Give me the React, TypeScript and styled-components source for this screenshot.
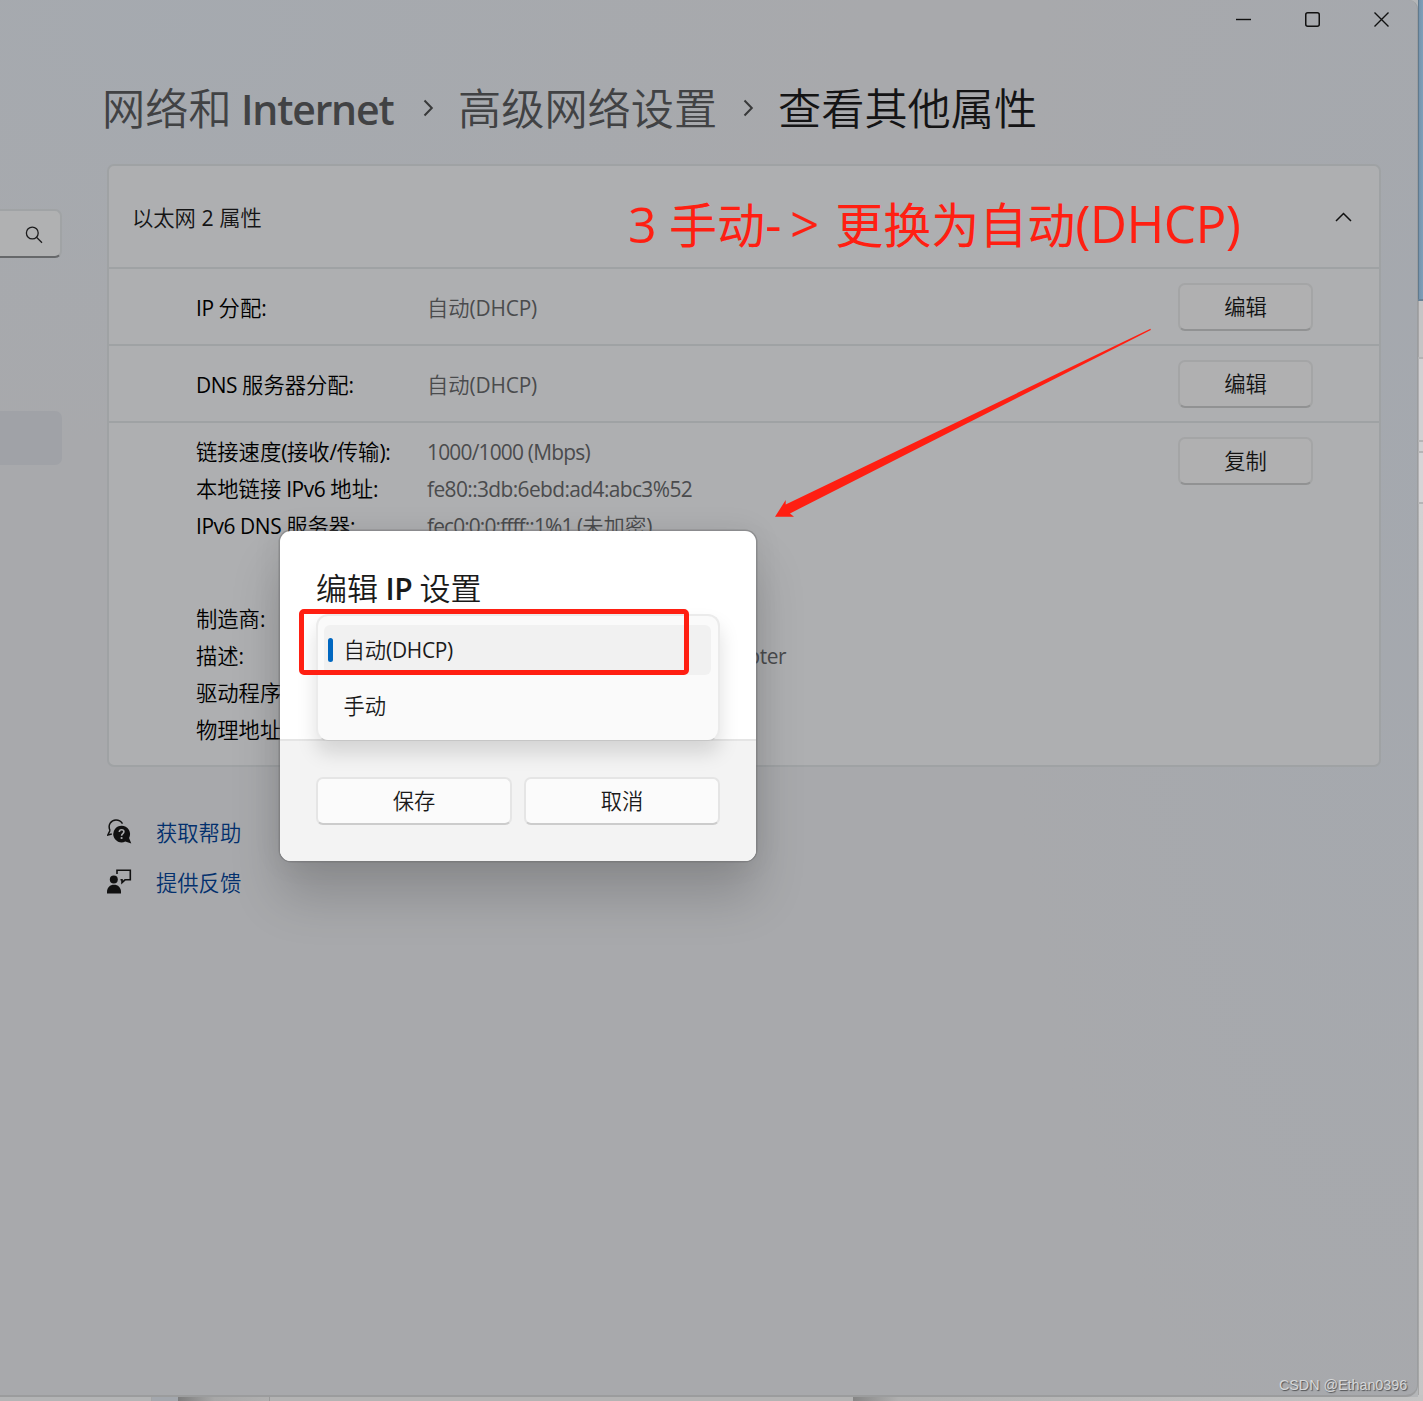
import React from "react";
import styled, { createGlobalStyle } from "styled-components";

const GlobalStyle = createGlobalStyle`
  *, *::before, *::after { box-sizing: border-box; }
  body { margin: 0; overflow: hidden; }
`;

const latin = `"Open Sans", "Noto Sans CJK SC", sans-serif`;
const cjk = `"Noto Sans CJK SC", "Open Sans", sans-serif`;

const Desktop = styled.div`
  position: relative;
  width: 1423px;
  height: 1401px;
  overflow: hidden;
  display: grid;
  grid-template-columns: 1418px 5px;
  grid-template-rows: 1397px 4px;
  background: #b4b6b8;
  font-family: ${cjk};
  font-weight: 350;
  color: #000;
`;

const RightStrip = styled.div`
  display: flex;
  flex-direction: column;
`;

const Strip = styled.div<{ $h: number; $bg: string; $line: string }>`
  height: ${(p) => p.$h}px;
  background: ${(p) => p.$bg};
  border-bottom: 2px solid ${(p) => p.$line};
  box-shadow: inset 1px 0 0 rgba(0, 0, 0, 0.16);
`;

const BottomStrip = styled.div`
  grid-column: 1 / 3;
  display: flex;
`;

const BottomPart = styled.div<{ $w: number; $bg: string; $edge?: string }>`
  width: ${(p) => p.$w}px;
  background: ${(p) => p.$bg};
  border-right: ${(p) => (p.$edge ? `1px solid ${p.$edge}` : "0")};
`;

const Window = styled.main`
  display: flex;
  background:
    radial-gradient(ellipse 700px 420px at 12% 2%, rgba(163, 170, 178, 0.55), transparent),
    radial-gradient(ellipse 420px 1100px at 100% 35%, rgba(162, 168, 176, 0.6), transparent),
    #a8a9ac;
  border-bottom: 2px solid #9b9c9d;
  border-right: 1px solid #9b9d9f;
  border-radius: 0 9px 12px 0;
`;

const Sidebar = styled.aside`
  width: 107px;
  padding-top: 209px;
  flex: none;
`;

const SearchBox = styled.div`
  width: 62px;
  height: 49px;
  display: flex;
  align-items: center;
  justify-content: flex-end;
  padding: 2px 17px 0 0;
  background: #b0b1b2;
  border: 2px solid #a0a3a5;
  border-left: 0;
  border-bottom-color: #66686a;
  border-radius: 0 7px 7px 0;
`;

const NavItem = styled.div`
  width: 62px;
  height: 54px;
  margin-top: 153px;
  background: #a0a2a7;
  border-radius: 0 7px 7px 0;
`;

const Content = styled.section`
  flex: 1;
  display: flex;
  flex-direction: column;
`;

const TitleBar = styled.header`
  height: 38px;
  display: flex;
  justify-content: flex-end;
  align-items: center;
  gap: 53px;
  padding-right: 27px;
`;

const Breadcrumb = styled.nav`
  height: 126px;
  display: flex;
  align-items: flex-start;
  padding-top: 36px;
  margin-left: -5px;
  line-height: 64px;
  font-size: 43.2px;
`;

const Crumb = styled.span<{ $current?: boolean; $w: number }>`
  color: ${(p) => (p.$current ? "#141415" : "#414244")};
  width: ${(p) => p.$w}px;
  white-space: nowrap;
`;

const CrumbSep = styled.svg<{ $w: number }>`
  width: ${(p) => p.$w}px;
  height: 64px;
  flex: none;
  margin-top: 2px;
`;

const Card = styled.section`
  width: 1274px;
  height: 603px;
  border: 2px solid #9fa2a4;
  border-radius: 7px;
  background: #aeafb1;
  font-size: 21.3px;
  line-height: 37px;
`;

const CardHeader = styled.div`
  height: 101px;
  display: flex;
  align-items: center;
  justify-content: space-between;
  padding: 0 27px 0 23px;
  color: #141415;
`;

const Row = styled.div`
  height: 77px;
  border-top: 2px solid #9fa2a4;
  padding: 14px 66px 0 87px;
  display: flex;
  align-items: flex-start;
`;

const Details = styled(Row)`
  height: auto;
`;

const RowText = styled.div`
  flex: 1;
  display: flex;
  padding-top: 5px;
`;

const DetailList = styled.dl`
  flex: 1;
  margin: -5px 0 0;
  display: grid;
  grid-template-columns: 231px 1fr;
  grid-template-rows: 37px 37px 93px 37px 37px 37px 37px;
`;

const Label = styled.dt`
  width: 231px;
  white-space: nowrap;
`;

const Value = styled.dd<{ $indent?: number }>`
  margin: 0;
  padding-left: ${(p) => p.$indent || 0}px;
  color: #4a4b4d;
  white-space: nowrap;
`;

const Button = styled.button<{ $dim?: boolean }>`
  flex: ${(p) => (p.$dim ? "none" : "1")};
  width: 135px;
  height: 48px;
  padding: 0 0 2px;
  border: 2px solid ${(p) => (p.$dim ? "#a4a5a6" : "#e5e5e5")};
  border-bottom-color: ${(p) => (p.$dim ? "#919293" : "#cccccc")};
  border-radius: 7px;
  background: ${(p) => (p.$dim ? "#b0b0b1" : "#fbfbfb")};
  color: ${(p) => (p.$dim ? "#121212" : "#1a1a1a")};
  font: 350 21.3px/32px ${cjk};
`;

const Links = styled.div`
  margin-top: 40px;
  display: flex;
  flex-direction: column;
`;

const LinkRow = styled.a`
  height: 50px;
  display: flex;
  align-items: center;
  gap: 24px;
  color: #03306d;
  font-size: 21.3px;
`;

const LinkText = styled.span`
  padding-bottom: 2px;
`;

const Latin = styled.span<{ $track: number; $size?: number; $weight?: number }>`
  font-family: ${latin};
  letter-spacing: ${(p) => p.$track}px;
  font-weight: ${(p) => p.$weight || 400};
  ${(p) => (p.$size ? `font-size: ${p.$size}px;` : "")}
`;

const Dialog = styled.section`
  position: absolute;
  left: 280px;
  top: 531px;
  width: 476px;
  height: 330px;
  border-radius: 11px;
  background: #fff;
  overflow: hidden;
  display: flex;
  flex-direction: column;
`;

const DialogShadow = styled.div`
  position: absolute;
  left: 280px;
  top: 531px;
  width: 476px;
  height: 330px;
  border-radius: 11px;
  box-shadow: 0 0 0 1.5px rgba(100, 100, 102, 0.4), 0 36px 50px rgba(0, 0, 0, 0.17), 0 0 30px rgba(0, 0, 0, 0.08);
`;

const DialogBody = styled.div`
  height: 208px;
  padding: 35px 36px 0;
`;

const DialogTitle = styled.h2`
  margin: 0;
  font-size: 31px;
  font-weight: 350;
  line-height: 42px;
  color: #1a1a1a;
  white-space: nowrap;
`;

const DialogFooter = styled.footer`
  flex: 1;
  display: flex;
  gap: 12px;
  align-items: flex-start;
  padding: 36px 36px 0;
  border-top: 2px solid #e5e5e5;
  background: #f3f3f3;
`;

const Dropdown = styled.ul`
  position: absolute;
  left: 316px;
  top: 614px;
  width: 404px;
  height: 127px;
  margin: 0;
  padding: 9px 7px 0 6px;
  list-style: none;
  border: 2px solid #ebebeb;
  border-bottom: 1px solid #c6c6c6;
  border-radius: 12px;
  background: #fafafa;
  box-shadow: 0 12px 20px rgba(0, 0, 0, 0.13);
`;

const Option = styled.li<{ $selected?: boolean }>`
  height: 50px;
  margin-bottom: 6px;
  display: flex;
  align-items: center;
  gap: ${(p) => (p.$selected ? 10.5 : 0)}px;
  padding: 0 0 ${(p) => (p.$selected ? "1px 4px" : "2px 19.5px")};
  border-radius: 6px;
  background: ${(p) => (p.$selected ? "#f1f1f1" : "transparent")};
  color: #1a1a1a;
  font-size: 21.3px;
  line-height: 32px;
`;

const Marker = styled.i`
  width: 5px;
  height: 24px;
  margin-top: 1px;
  border-radius: 3px;
  background: #0067c0;
`;

const RedBox = styled.div`
  position: absolute;
  left: 299px;
  top: 609px;
  width: 390px;
  height: 66px;
  border: 5px solid #ff1f12;
  border-radius: 5px;
`;

const RedNote = styled.div`
  position: absolute;
  left: 628px;
  top: 186px;
  display: flex;
  align-items: baseline;
  font-size: 48px;
  font-weight: 400;
  line-height: 72px;
  color: #ff1f12;
  white-space: pre;
`;

const Arrow = styled.svg`
  position: absolute;
  left: 770px;
  top: 325px;
`;

const Watermark = styled.div`
  position: absolute;
  left: 1279px;
  top: 1376px;
  font: 14.3px/18px "Liberation Sans", sans-serif;
  color: #d6d7d8;
  text-shadow: 1px 1px 1px #505153;
  white-space: nowrap;
`;

type MixedProps = { text: string; track?: number; size?: number; weight?: number };

function Mixed({ text, track = -0.42, size = 20.9, weight }: MixedProps) {
  const runs = text.match(/[\u4e00-\u9fff]+|[^\u4e00-\u9fff]+/g) || [];
  return (
    <>
      {runs.map((run, i) =>
        /[\u4e00-\u9fff]/.test(run) ? (
          <span key={i}>{run}</span>
        ) : (
          <Latin key={i} $track={track} $size={size} $weight={weight}>{run}</Latin>
        )
      )}
    </>
  );
}

const details: { label: string; value?: string; track?: number; indent?: number }[] = [
  { label: "链接速度(接收/传输):", value: "1000/1000 (Mbps)", track: -0.78 },
  { label: "本地链接 IPv6 地址:", value: "fe80::3db:6ebd:ad4:abc3%52", track: -0.6 },
  { label: "IPv6 DNS 服务器:", value: "fec0:0:0:ffff::1%1 (未加密)", track: -0.88 },
  { label: "制造商:" },
  { label: "描述:", value: "Adapter", indent: 284 },
  { label: "驱动程序版本:" },
  { label: "物理地址(MAC):" },
];

const SearchIcon = () => (
  <svg width="18" height="18" viewBox="0 0 18 18" fill="none" stroke="#1c1c1d" strokeWidth="1.3">
    <circle cx="7.300" cy="7" r="5.900" />
    <path d="M11.500 11.200 17 16.700" />
  </svg>
);

const HelpIcon = () => (
  <svg width="25" height="26" viewBox="0 0 25 26">
    <path d="M3 11.500C.5 6 4 1 9 1c2.800 0 5 1.300 6.500 3.600M3 11.500 .8 16l4-.9" fill="none" stroke="#111" strokeWidth="1.500" />
    <path d="M14.500 6.800a8.300 8.300 0 1 0 3.800 15.700l6 2.100-2.200-5.600A8.300 8.300 0 0 0 14.500 6.800Z" fill="#111" />
    <path d="M12.300 13c.1-1.500 1-2.200 2.300-2.200s2.300.8 2.300 2c0 1.900-2.300 1.800-2.300 3.900" fill="none" stroke="#aaabad" strokeWidth="1.600" />
    <circle cx="14.600" cy="19" r="1.100" fill="#aaabad" />
  </svg>
);

const FeedbackIcon = () => (
  <svg width="25" height="26" viewBox="0 0 25 26">
    <circle cx="6.800" cy="10.500" r="4" fill="#111" />
    <path d="M0 24.500v-1.500C0 18.500 3 15.800 7 15.800s7 2.700 7 7.200v1.500Z" fill="#111" />
    <path d="M10 5V1.300h13.300v9.500h-5.300l-3 2.800v-2.800H13.500" fill="none" stroke="#111" strokeWidth="1.600" />
  </svg>
);

export default function App() {
  return (
    <>
      <GlobalStyle />
      <Desktop>
        <Window>
          <Sidebar>
            <SearchBox><SearchIcon /></SearchBox>
            <NavItem />
          </Sidebar>
          <Content>
            <TitleBar>
              <svg width="16" height="16"><path d="M0 8.500h15" stroke="#111" strokeWidth="1.400" /></svg>
              <svg width="16" height="16"><rect x=".75" y="1.750" width="13.500" height="13.500" rx="2" fill="none" stroke="#111" strokeWidth="1.500" /></svg>
              <svg width="16" height="16"><path d="m.5 1.500 14 14M14.500 1.500 .5 15.500" stroke="#111" strokeWidth="1.400" /></svg>
            </TitleBar>
            <Breadcrumb>
              <Crumb $w={293}><Mixed text="网络和 Internet" size={41} weight={600} track={-1.2} /></Crumb>
              <CrumbSep $w={63} viewBox="0 0 63 64"><path d="m29.500 24.500 7.300 7.500-7.300 7.500" fill="none" stroke="#38393a" strokeWidth="2" /></CrumbSep>
              <Crumb $w={258}>高级网络设置</Crumb>
              <CrumbSep $w={62} viewBox="0 0 62 64"><path d="m28.500 24.500 7.300 7.500-7.300 7.500" fill="none" stroke="#38393a" strokeWidth="2" /></CrumbSep>
              <Crumb $w={260} $current>查看其他属性</Crumb>
            </Breadcrumb>
            <Card>
              <CardHeader>
                <span><Mixed text="以太网 2 属性" size={21.3} track={0} /></span>
                <svg width="17" height="12"><path d="m1 10 7.500-7.500L16 10" fill="none" stroke="#111" strokeWidth="1.500" /></svg>
              </CardHeader>
              <Row>
                <RowText>
                  <Label><Mixed text="IP 分配:" /></Label>
                  <Value><Mixed text="自动(DHCP)" track={-0.2} /></Value>
                </RowText>
                <Button $dim>编辑</Button>
              </Row>
              <Row>
                <RowText>
                  <Label><Mixed text="DNS 服务器分配:" /></Label>
                  <Value><Mixed text="自动(DHCP)" track={-0.2} /></Value>
                </RowText>
                <Button $dim>编辑</Button>
              </Row>
              <Details>
                <DetailList>
                  {details.map((d) => (
                    <React.Fragment key={d.label}>
                      <Label><Mixed text={d.label} /></Label>
                      <Value $indent={d.indent}>{d.value && <Mixed text={d.value} track={d.track} />}</Value>
                    </React.Fragment>
                  ))}
                </DetailList>
                <Button $dim>复制</Button>
              </Details>
            </Card>
            <Links>
              <LinkRow><HelpIcon /><LinkText>获取帮助</LinkText></LinkRow>
              <LinkRow><FeedbackIcon /><LinkText>提供反馈</LinkText></LinkRow>
            </Links>
          </Content>
        </Window>
        <RightStrip>
          <Strip $h={301} $bg="linear-gradient(90deg,#7290a8,#7f9fba)" $line="#6a8397" />
          <Strip $h={58} $bg="#c6c5c6" $line="#b4b4b5" />
          <Strip $h={83} $bg="#d2d1d3" $line="#b5b5b6" />
          <Strip $h={11} $bg="#d2d1d3" $line="#b5b5b6" />
          <Strip $h={51} $bg="#d6d5d7" $line="#b5b5b6" />
          <Strip $h={893} $bg="linear-gradient(#d2d2d3,#c6c6c6)" $line="#c4c4c4" />
        </RightStrip>
        <BottomStrip>
          <BottomPart $w={152} $bg="#b3b4b5" $edge="#a3a4a5" />
          <BottomPart $w={26} $bg="#a3a7ad" />
          <BottomPart $w={92} $bg="linear-gradient(90deg,#7c7c7c,#a8a8a8 40%,#b0b0b0)" $edge="#999999" />
          <BottomPart $w={583} $bg="#b3b3b3" />
          <BottomPart $w={570} $bg="linear-gradient(90deg,#858585,#b0b0b0 8%,#c4c4c4)" />
        </BottomStrip>
        <DialogShadow />
        <Dialog>
          <DialogBody>
            <DialogTitle><Mixed text="编辑 IP 设置" weight={600} size={30} track={-0.4} /></DialogTitle>
          </DialogBody>
          <DialogFooter>
            <Button>保存</Button>
            <Button>取消</Button>
          </DialogFooter>
        </Dialog>
        <Dropdown>
          <Option $selected><Marker /><span><Mixed text="自动(DHCP)" track={-0.3} /></span></Option>
          <Option><span>手动</span></Option>
        </Dropdown>
        <RedBox />
        <RedNote>
          <Mixed text="3 手动" size={50} track={-0.3} />
          <Mixed text="->" size={51} track={8.5} />
          <Mixed text=" " size={51} track={-5.5} />
          <Mixed text="更换为自动(DHCP)" size={51.3} track={-0.6} />
        </RedNote>
        <Arrow width="385" height="196">
          <path d="M380.500 3.800 15.700 179.600V175L5 191.800h19l-4-3.400L380.800 5Z" fill="#ff1f12" />
        </Arrow>
        <Watermark>CSDN @Ethan0396</Watermark>
      </Desktop>
    </>
  );
}
